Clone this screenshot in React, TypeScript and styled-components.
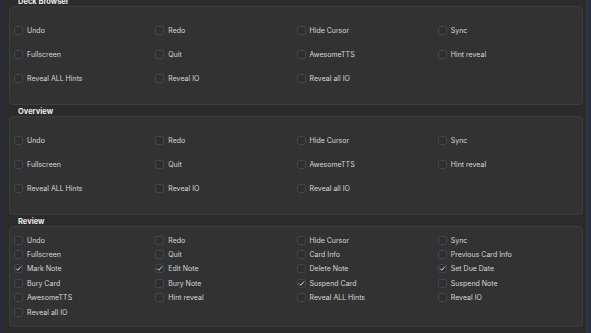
import React from "react";
import styled, { createGlobalStyle } from "styled-components";

const Global = createGlobalStyle`
  html, body { margin: 0; padding: 0; background: #2b2b2b; overflow: hidden; }
  body { font-family: Inter, "Liberation Sans", sans-serif; }
`;

const Page = styled.div`
  display: flex;
  width: 591px;
  height: 333px;
  overflow: hidden;
  background: #2b2b2b;
  border-left: 3px solid #262b37;
  box-sizing: border-box;
`;

const Content = styled.div`
  flex: 1;
  display: flex;
  flex-direction: column;
  padding: 0 3px 0 6px;
  margin-top: -2px;
`;

const ScrollTrack = styled.div`
  width: 4px;
  background: #2a3040;
  border-left: 1px solid #343844;
`;

const Section = styled.section<{ $gap: number }>`
  display: flex;
  flex-direction: column;
  margin-top: ${(p) => p.$gap}px;
`;

const Heading = styled.div`
  height: 8px;
  line-height: 8px;
  padding-left: 9px;
  font-size: 7.5px;
  font-weight: 700;
  color: #ececec;
`;

const Box = styled.div<{ $pt: number; $pb: number }>`
  border: 1px solid #393d48;
  border-radius: 4px;
  background: #323232;
  padding: ${(p) => p.$pt}px 3px ${(p) => p.$pb}px 4px;
`;

const Grid = styled.div<{ $row: number }>`
  display: grid;
  grid-template-columns: repeat(4, 1fr);
  grid-auto-rows: ${(p) => p.$row}px;
`;

const Item = styled.label`
  display: flex;
  align-items: center;
  gap: 4px;
  font-size: 7px;
  color: #d8d8d8;
  white-space: nowrap;
`;

const Check = styled.span`
  width: 9px;
  height: 9px;
  box-sizing: border-box;
  border: 1px solid #414653;
  border-radius: 2.5px;
  background: #2f2f2f;
  display: flex;
  align-items: center;
  justify-content: center;
  flex: none;
`;

type Opt = [string, boolean?];

const CheckIcon = () => (
  <svg width="7" height="7" viewBox="0 0 10 10">
    <path d="M1.8 5.3 L4 7.5 L8.3 2.5" fill="none" stroke="#e4e4e4" strokeWidth="1.3" strokeLinecap="round" strokeLinejoin="round" />
  </svg>
);

const Option = ({ label, checked }: { label: string; checked?: boolean }) => (
  <Item>
    <Check>{checked && <CheckIcon />}</Check>
    {label}
  </Item>
);

const basic: Opt[] = [
  ["Undo"], ["Redo"], ["Hide Cursor"], ["Sync"],
  ["Fullscreen"], ["Quit"], ["AwesomeTTS"], ["Hint reveal"],
  ["Reveal ALL Hints"], ["Reveal IO"], ["Reveal all IO"],
];

const review: Opt[] = [
  ["Undo"], ["Redo"], ["Hide Cursor"], ["Sync"],
  ["Fullscreen"], ["Quit"], ["Card Info"], ["Previous Card Info"],
  ["Mark Note", true], ["Edit Note", true], ["Delete Note"], ["Set Due Date", true],
  ["Bury Card"], ["Bury Note"], ["Suspend Card", true], ["Suspend Note"],
  ["AwesomeTTS"], ["Hint reveal"], ["Reveal ALL Hints"], ["Reveal IO"],
  ["Reveal all IO"],
];

const Group = ({ title, opts, row, pt, pb, gap }: { title: string; opts: Opt[]; row: number; pt: number; pb: number; gap: number }) => (
  <Section $gap={gap}>
    <Heading>{title}</Heading>
    <Box $pt={pt} $pb={pb}>
      <Grid $row={row}>
        {opts.map(([l, c], i) => (
          <Option key={i} label={l} checked={c} />
        ))}
      </Grid>
    </Box>
  </Section>
);

export default function App() {
  return (
    <>
      <Global />
      <Page>
        <Content>
          <Group title="Deck Browser" opts={basic} row={24} pt={11} pb={14} gap={0} />
          <Group title="Overview" opts={basic} row={24} pt={11} pb={14} gap={3} />
          <Group title="Review" opts={review} row={14.4} pt={6} pb={7} gap={3} />
        </Content>
        <ScrollTrack />
      </Page>
    </>
  );
}
